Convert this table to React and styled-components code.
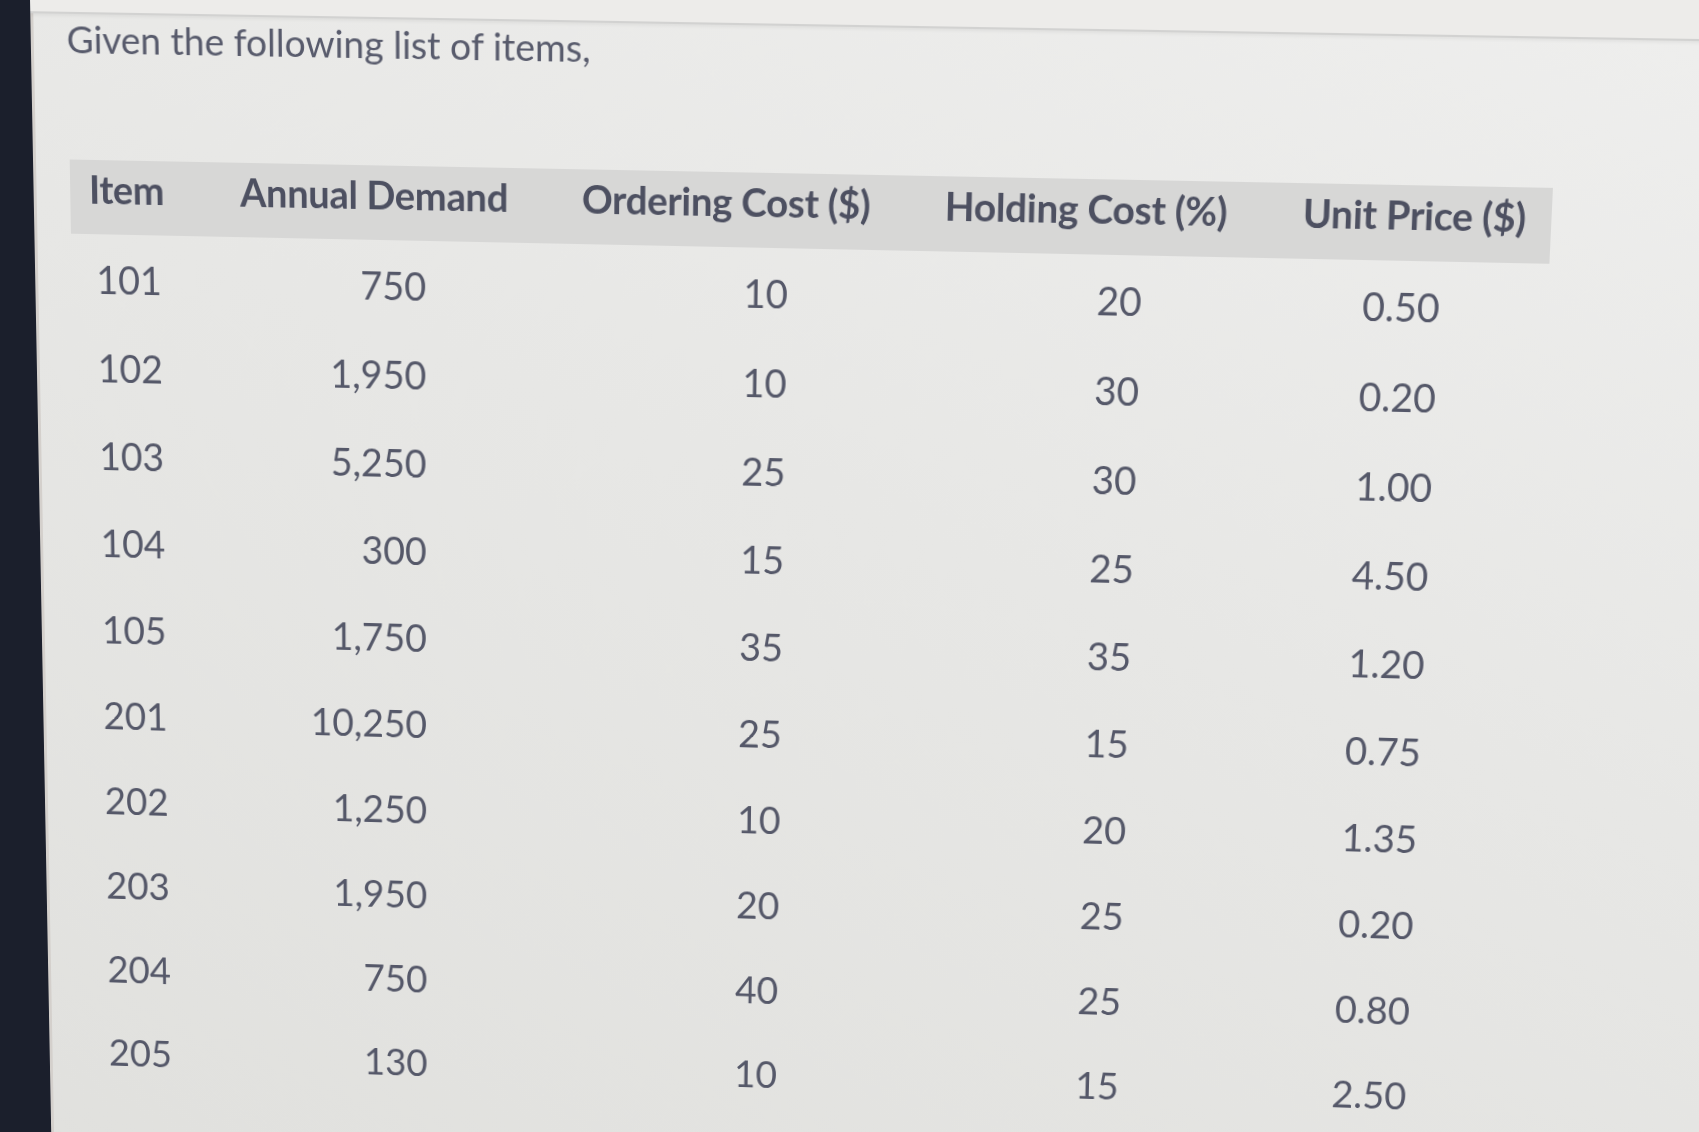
import styled, { createGlobalStyle } from "styled-components";

const GlobalStyle = createGlobalStyle`
  html, body {
    margin: 0;
    padding: 0;
    height: 100%;
    overflow: hidden;
    background: #1b1f2c;
  }
  #root {
    height: 100%;
  }
`;

const Desk = styled.div`
  height: 100vh;
  overflow: hidden;
  background: #1b1f2c;
  padding-left: 30px;
  box-sizing: border-box;
`;

const Screen = styled.div`
  width: 1780px;
  height: 1300px;
  margin-top: -20px;
  background: linear-gradient(200deg, #efefee 0%, #e7e7e5 45%, #e0e0dd 100%);
  box-shadow: inset 3px 0 0 #d4d0cc;
  font-family: Lato, "Noto Sans", sans-serif;
  color: #555869;
  transform-origin: 774px 592px;
  transform: perspective(2000px) rotateX(-5deg) rotateY(-2deg) rotate(1.3deg)
    skewX(0.45deg);
`;

const TopRule = styled.div`
  height: 55px;
  background: #edecea;
  border-bottom: 2px solid #d2d2d1;
  box-shadow: 0 2px 3px rgba(0, 0, 0, 0.05);
`;

const Title = styled.h1`
  margin: 2px 0 0;
  padding-left: 36px;
  font-size: 37px;
  line-height: 44px;
  font-weight: 400;
  color: #585b6c;
`;

const Table = styled.div`
  margin: 96px 0 0 37px;
  width: 1459px;
`;

const Row = styled.div`
  display: grid;
  grid-template-columns: 152px 341px 358px 349px 259px;
  height: ${(p) => (p.$head ? "73px" : "88px")};
  align-items: ${(p) => (p.$head ? "start" : "center")};
  background: ${(p) => (p.$head ? "#d7d7d6" : "transparent")};
`;

const HeadCell = styled.div`
  padding: 5px 0 0 19px;
  font-size: 38px;
  line-height: 46px;
  font-weight: 700;
  color: #4d5061;
  white-space: nowrap;
  letter-spacing: -0.3px;
`;

const Cell = styled.div`
  font-size: 38px;
  line-height: 46px;
  text-align: ${(p) => (p.$left ? "left" : "right")};
  padding-left: ${(p) => (p.$left ? "25px" : "0")};
  padding-right: ${(p) => p.$pr || 0}px;
`;

const headers = [
  "Item",
  "Annual Demand",
  "Ordering Cost ($)",
  "Holding Cost (%)",
  "Unit Price ($)",
];

const valuePadding = [0, 136, 134, 135, 104];

const items = [
  ["101", "750", "10", "20", "0.50"],
  ["102", "1,950", "10", "30", "0.20"],
  ["103", "5,250", "25", "30", "1.00"],
  ["104", "300", "15", "25", "4.50"],
  ["105", "1,750", "35", "35", "1.20"],
  ["201", "10,250", "25", "15", "0.75"],
  ["202", "1,250", "10", "20", "1.35"],
  ["203", "1,950", "20", "25", "0.20"],
  ["204", "750", "40", "25", "0.80"],
  ["205", "130", "10", "15", "2.50"],
];

export default function App() {
  return (
    <>
      <GlobalStyle />
      <Desk>
        <Screen>
          <TopRule />
          <Title>Given the following list of items,</Title>
          <Table>
            <Row $head>
              {headers.map((h) => (
                <HeadCell key={h}>{h}</HeadCell>
              ))}
            </Row>
            {items.map((row) => (
              <Row key={row[0]}>
                {row.map((v, i) => (
                  <Cell key={i} $left={i === 0} $pr={valuePadding[i]}>
                    {v}
                  </Cell>
                ))}
              </Row>
            ))}
          </Table>
        </Screen>
      </Desk>
    </>
  );
}
